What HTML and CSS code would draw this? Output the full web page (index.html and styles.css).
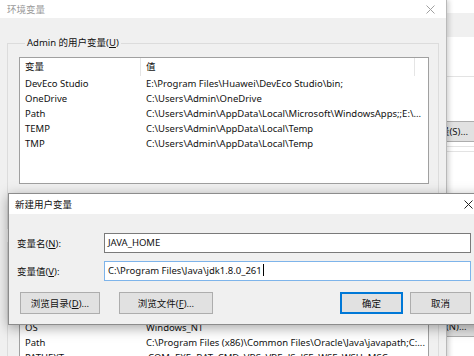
FILE: index.html
```html
<!DOCTYPE html>
<html lang="zh-CN">
<head>
    <meta charset="UTF-8">
    <meta name="viewport" content="width=device-width, initial-scale=1.0">
    <title>新建用户变量</title>
    <link rel="stylesheet" href="styles.css">
</head>
<body>
    <div class="desk">
        <!-- window behind, only its right strip shows -->
        <div class="back-win">
            <div class="bw-top"></div>
            <div class="bw-band"></div>
            <div class="bw-line"></div>
            <div class="bw-btn">量(S)...</div>
            <div class="bw-line thin"></div>
            <div class="bw-line thin"></div>
            <div class="bw-btn low">(N)...</div>
        </div>

        <div class="env-win">
            <div class="titlebar inactive">
                <span class="title">环境变量</span>
                <svg class="close" width="9" height="9" viewBox="0 0 9 9"><path d="M0.5 0.5L8.5 8.5M8.5 0.5L0.5 8.5" stroke="#a0a0a0" stroke-width="1"/></svg>
            </div>
            <div class="env-body">
                <fieldset class="group">
                    <legend>Admin 的用户变量(<u>U</u>)</legend>
                    <div class="list user-list">
                        <div class="list-head">
                            <span class="col-name">变量</span>
                            <span class="col-val">值</span>
                        </div>
                        <div class="row"><span class="col-name">DevEco Studio</span><span class="col-val">E:\Program Files\Huawei\DevEco Studio\bin;</span></div>
                        <div class="row"><span class="col-name">OneDrive</span><span class="col-val">C:\Users\Admin\OneDrive</span></div>
                        <div class="row"><span class="col-name">Path</span><span class="col-val">C:\Users\Admin\AppData\Local\Microsoft\WindowsApps;;E:\...</span></div>
                        <div class="row"><span class="col-name">TEMP</span><span class="col-val">C:\Users\Admin\AppData\Local\Temp</span></div>
                        <div class="row"><span class="col-name">TMP</span><span class="col-val">C:\Users\Admin\AppData\Local\Temp</span></div>
                    </div>
                    <div class="group-btns">
                        <button class="btn">新建(<u>N</u>)...</button>
                        <button class="btn">编辑(<u>E</u>)...</button>
                        <button class="btn">删除(<u>D</u>)</button>
                    </div>
                </fieldset>

                <fieldset class="group">
                    <legend>系统变量(<u>S</u>)</legend>
                    <div class="list sys-list">
                        <div class="list-head">
                            <span class="col-name">变量</span>
                            <span class="col-val">值</span>
                        </div>
                        <div class="row"><span class="col-name">ComSpec</span><span class="col-val">C:\WINDOWS\system32\cmd.exe</span></div>
                        <div class="row"><span class="col-name">DriverData</span><span class="col-val">C:\Windows\System32\Drivers\DriverData</span></div>
                        <div class="row"><span class="col-name">NUMBER_OF_PROCESSORS</span><span class="col-val">8</span></div>
                        <div class="row"><span class="col-name">OS</span><span class="col-val">Windows_NT</span></div>
                        <div class="row"><span class="col-name">Path</span><span class="col-val">C:\Program Files (x86)\Common Files\Oracle\Java\javapath;C:...</span></div>
                        <div class="row"><span class="col-name">PATHEXT</span><span class="col-val">.COM;.EXE;.BAT;.CMD;.VBS;.VBE;.JS;.JSE;.WSF;.WSH;.MSC</span></div>
                    </div>
                </fieldset>
            </div>
        </div>

        <div class="dialog">
            <div class="titlebar">
                <span class="title">新建用户变量</span>
                <svg class="close" width="9" height="9" viewBox="0 0 9 9"><path d="M0.5 0.5L8.5 8.5M8.5 0.5L0.5 8.5" stroke="#222" stroke-width="1"/></svg>
            </div>
            <div class="dialog-body">
                <div class="form-grid">
                    <label class="field-label">变量名(<u>N</u>):</label>
                    <div class="field">JAVA_HOME</div>
                    <label class="field-label">变量值(<u>V</u>):</label>
                    <div class="field focused">C:\Program Files\Java\jdk1.8.0_261<span class="caret"></span></div>
                </div>
                <div class="dialog-btns">
                    <button class="btn browse-dir">浏览目录(<u>D</u>)...</button>
                    <button class="btn browse-file">浏览文件(<u>F</u>)...</button>
                    <span class="spacer"></span>
                    <button class="btn ok">确定</button>
                    <button class="btn cancel">取消</button>
                </div>
            </div>
        </div>
    </div>
</body>
</html>
```

FILE: styles.css
```css
* {
    box-sizing: border-box;
}
html, body {
    margin: 0;
    padding: 0;
}
body {
    font-family: "Noto Sans", "Noto Sans CJK SC", sans-serif;
    font-size: 9.5px;
    color: #111;
    background: #fff;
}
u {
    text-decoration: underline;
    text-underline-offset: 1px;
}
.desk {
    position: relative;
    width: 474px;
    height: 356px;
    overflow: hidden;
    background: #fff;
}

/* window in the back */
.back-win {
    position: absolute;
    left: 430px;
    top: 0;
    width: 60px;
    height: 356px;
    background: #fff;
    display: flex;
    flex-direction: column;
}
.bw-top {
    height: 13px;
}
.bw-band {
    height: 24px;
    background: #f0f0f0;
}
.bw-line {
    height: 40px;
    border-bottom: 1px solid #e3e3e3;
}
.bw-line.thin {
    height: 5px;
}
.bw-btn {
    margin-top: 44px;
    height: 21px;
    line-height: 19px;
    padding-left: 9px;
    background: #e1e1e1;
    border: 1px solid #adadad;
    white-space: nowrap;
}
.bw-btn.low {
    margin-top: 164px;
    padding-left: 15px;
}

/* main window */
.env-win {
    position: absolute;
    left: 0;
    top: 0;
    width: 447px;
    height: 380px;
    background: #f0f0f0;
    border-right: 1px solid #b9b9b9;
    box-shadow: 2px 0 5px rgba(0, 0, 0, 0.18);
}
.titlebar {
    display: flex;
    align-items: center;
    justify-content: space-between;
    background: #fff;
}
.env-win .titlebar {
    height: 18px;
    padding-left: 7px;
}
.titlebar.inactive .title {
    color: #9a9a9a;
}
.env-win .close {
    margin-right: 11px;
}
.env-body {
    padding: 18px 7px 0 7px;
}
.group {
    min-width: 0;
    margin: 0;
    padding: 7px 9px 10px 11px;
    border: 1px solid #dcdcdc;
}
.group + .group {
    margin-top: 6px;
}
.group legend {
    margin-left: 6px;
    padding: 0 2px;
    line-height: 14px;
}
.list {
    background: #fff;
    border: 1px solid #a0a0a0;
    overflow: hidden;
}
.user-list {
    height: 127px;
}
.sys-list {
    height: 120px;
}
.list-head,
.row {
    display: flex;
    white-space: nowrap;
}
.list-head {
    height: 18px;
    line-height: 18px;
}
.row {
    height: 15px;
    line-height: 15px;
}
.col-name {
    width: 121px;
    flex: none;
    padding-left: 5px;
    overflow: hidden;
}
.col-val {
    padding-left: 5px;
}
.list-head .col-name {
    border-right: 1px solid #e5e5e5;
}
.list-head .col-val {
    width: 274px;
    border-right: 1px solid #e5e5e5;
}
.group-btns {
    display: flex;
    justify-content: flex-end;
    gap: 7px;
    margin-top: 12px;
}

/* buttons */
.btn {
    font: inherit;
    color: #111;
    height: 22px;
    padding: 0;
    white-space: nowrap;
    background: #e1e1e1;
    border: 1px solid #adadad;
    border-radius: 0;
}
.group-btns .btn {
    width: 62px;
}

/* new variable dialog */
.dialog {
    position: absolute;
    left: 8px;
    top: 193px;
    width: 484px;
    background: #f0f0f0;
    border: 1px solid #8c8c8c;
    box-shadow: 0 3px 12px rgba(0, 0, 0, 0.35);
}
.dialog .titlebar {
    height: 20px;
    padding-left: 6px;
}
.dialog .close {
    margin-right: 18px;
}
.dialog-body {
    padding: 19px 20px 10px 8px;
}
.form-grid {
    display: grid;
    grid-template-columns: 87px 1fr;
    row-gap: 8px;
    align-items: center;
}
.field-label {
    white-space: nowrap;
}
.field {
    height: 20px;
    line-height: 18px;
    padding-left: 3px;
    white-space: nowrap;
    background: #fff;
    border: 1px solid #7a7a7a;
}
.field.focused {
    border-color: #7eb4ea;
}
.caret {
    display: inline-block;
    width: 1px;
    height: 12px;
    margin-left: 1px;
    vertical-align: -2px;
    background: #000;
}
.dialog-btns {
    display: flex;
    margin-top: 11px;
    padding-left: 3px;
}
.browse-dir {
    width: 80px;
}
.browse-file {
    width: 94px;
    margin-left: 19px;
}
.spacer {
    flex: 1;
}
.ok {
    width: 63px;
    border-color: #0078d7;
    box-shadow: inset 0 0 0 1px #0078d7;
}
.cancel {
    width: 61px;
    margin-left: 7px;
}
```
